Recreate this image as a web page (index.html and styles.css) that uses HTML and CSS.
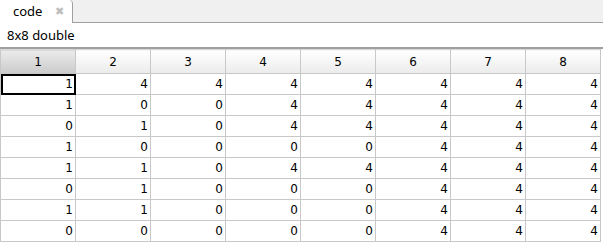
FILE: index.html
```html
<!DOCTYPE html>
<html lang="en">
<head>
    <meta charset="UTF-8">
    <title>Variables - code</title>
    <link rel="stylesheet" href="styles.css">
</head>
<body>
    <div class="tabstrip">
        <div class="tab">
            <span class="tab-title">code</span>
            <span class="tab-close">&#x2716;</span>
        </div>
    </div>
    <div class="infobar">8x8 double</div>
    <table class="grid">
        <thead>
            <tr>
                <th class="selected">1</th><th>2</th><th>3</th><th>4</th><th>5</th><th>6</th><th>7</th><th>8</th>
            </tr>
        </thead>
        <tbody>
            <tr><td class="current">1</td><td>4</td><td>4</td><td>4</td><td>4</td><td>4</td><td>4</td><td>4</td></tr>
            <tr><td>1</td><td>0</td><td>0</td><td>4</td><td>4</td><td>4</td><td>4</td><td>4</td></tr>
            <tr><td>0</td><td>1</td><td>0</td><td>4</td><td>4</td><td>4</td><td>4</td><td>4</td></tr>
            <tr><td>1</td><td>0</td><td>0</td><td>0</td><td>0</td><td>4</td><td>4</td><td>4</td></tr>
            <tr><td>1</td><td>1</td><td>0</td><td>4</td><td>4</td><td>4</td><td>4</td><td>4</td></tr>
            <tr><td>0</td><td>1</td><td>0</td><td>0</td><td>0</td><td>4</td><td>4</td><td>4</td></tr>
            <tr><td>1</td><td>1</td><td>0</td><td>0</td><td>0</td><td>4</td><td>4</td><td>4</td></tr>
            <tr><td>0</td><td>0</td><td>0</td><td>0</td><td>0</td><td>4</td><td>4</td><td>4</td></tr>
        </tbody>
    </table>
</body>
</html>
```

FILE: styles.css
```css
body {
    margin: 0;
    padding: 0;
    background: #fff;
    font-family: "Noto Sans", "Open Sans", sans-serif;
    overflow: hidden;
}
.tabstrip {
    height: 22px;
    background: #f0f0f0;
    border-bottom: 1px solid #a0a0a0;
    display: flex;
    align-items: flex-end;
}
.tab {
    width: 73px;
    height: 23px;
    margin-bottom: -1px;
    background: #fff;
    border-right: 1px solid #a0a0a0;
    border-top-right-radius: 4px;
    display: flex;
    align-items: center;
    box-sizing: border-box;
    padding: 0 0 2px 13px;
}
.tab-title {
    font-size: 13px;
    color: #000;
}
.tab-close {
    margin-left: 13px;
    font-size: 11px;
    color: #bdbdbd;
}
.infobar {
    height: 26px;
    line-height: 24px;
    padding-left: 7px;
    font-size: 13px;
    color: #000;
    border-bottom: 2px solid #a0a0a0;
    box-sizing: border-box;
}
.grid {
    border-collapse: collapse;
    table-layout: fixed;
    font-family: "DejaVu Sans", Verdana, sans-serif;
    font-size: 12px;
}
.grid th {
    width: 74px;
    height: 23px;
    padding: 0;
    font-weight: normal;
    text-align: center;
    border: 1px solid #c8c8c8;
    border-top: 1px solid #d8d8d8;
    background: linear-gradient(#ffffff, #ebebeb);
}
.grid th.selected {
    background: linear-gradient(#ebebeb, #cbcbcb);
}
.grid th:first-child,
.grid td:first-child {
    width: 74px;
}
.grid td {
    height: 21px;
    padding: 0 2px 0 0;
    text-align: right;
    border: 1px solid #c8c8c8;
    box-sizing: border-box;
}
.grid td.current {
    outline: 2px solid #000;
    outline-offset: -2px;
}
```
